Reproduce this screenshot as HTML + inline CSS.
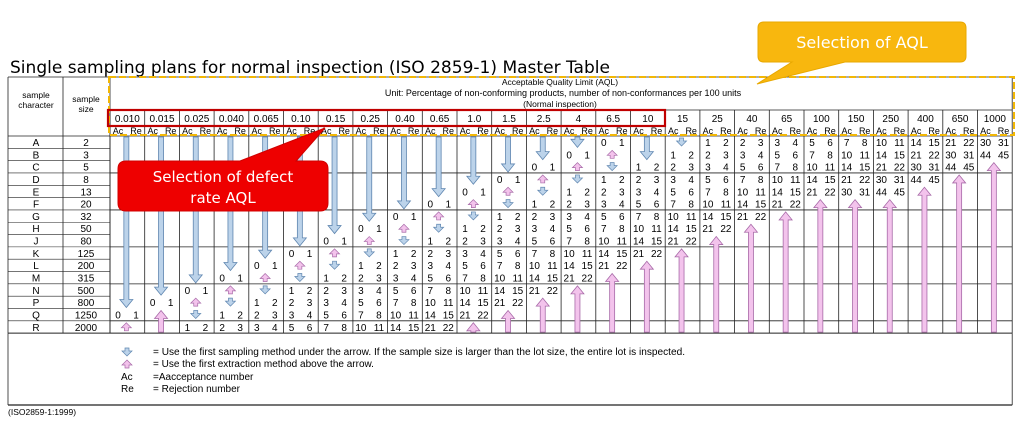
<!DOCTYPE html>
<html><head><meta charset="utf-8">
<style>
html,body{margin:0;padding:0;background:#fff;width:1024px;height:425px;overflow:hidden;position:relative}
svg{position:absolute;left:0;top:0}
text{font-family:"Liberation Sans",sans-serif;fill:#000}
</style></head><body>
<svg id="s" width="1024" height="425" viewBox="0 0 1024 425">
<text x="10" y="73" font-size="17" style="font-family:'DejaVu Sans',sans-serif" textLength="600" lengthAdjust="spacingAndGlyphs">Single sampling plans for normal inspection (ISO 2859-1) Master  Table</text>
<text x="560" y="85" font-size="8.5" text-anchor="middle">Acceptable Quality Limit (AQL)</text>
<text x="563" y="96" font-size="9" text-anchor="middle">Unit: Percentage of non-conforming products, number of non-conformances per 100 units</text>
<text x="560" y="107" font-size="8.5" text-anchor="middle">(Normal inspection)</text>
<text x="36" y="98" font-size="8.5" text-anchor="middle">sample</text>
<text x="36" y="108" font-size="8.5" text-anchor="middle">character</text>
<text x="86" y="102" font-size="8.5" text-anchor="middle">sample</text>
<text x="86" y="112" font-size="8.5" text-anchor="middle">size</text>
<text x="8" y="415" font-size="8.5">(ISO2859-1:1999)</text>
<g id="leg">
<text x="153" y="355" font-size="10" textLength="532" lengthAdjust="spacingAndGlyphs">=  Use the first sampling method under the arrow. If the sample size is larger than the lot size, the entire lot is inspected.</text>
<text x="153" y="367" font-size="10">=  Use the first extraction method above the arrow.</text>
<text x="121" y="380" font-size="10">Ac</text><text x="153" y="380" font-size="10">=Aacceptance number</text>
<text x="121" y="392" font-size="10">Re</text><text x="153" y="392" font-size="10">=  Rejection number</text>
</g>
</svg>
<svg id="o" width="1024" height="425" viewBox="0 0 1024 425">
<rect x="109" y="77" width="905" height="58" fill="none" stroke="#f2b705" stroke-width="2" stroke-dasharray="7,3"/>
<rect x="108" y="110" width="557" height="16" fill="none" stroke="#c00000" stroke-width="2.2"/>
<path d="M766 22 H960 Q966 22 966 28 V56 Q966 62 960 62 H845 L757 84 L792 62 H764 Q758 62 758 56 V28 Q758 22 764 22 Z" fill="#f8b70e" stroke="#e8a800" stroke-width="1"/>
<text x="862" y="48" font-size="16" text-anchor="middle" style="fill:#fff;font-family:'DejaVu Sans','Liberation Sans',sans-serif">Selection of AQL</text>
<path d="M126 161 H240 L325 128 L296 161 H320 Q328 161 328 169 V203 Q328 211 320 211 H126 Q118 211 118 203 V169 Q118 161 126 161 Z" fill="#ee0000" stroke="#d00000" stroke-width="1"/>
<text x="223" y="182" font-size="15" text-anchor="middle" style="fill:#fff;font-family:'DejaVu Sans','Liberation Sans',sans-serif">Selection of defect</text>
<text x="223" y="203" font-size="15" text-anchor="middle" style="fill:#fff;font-family:'DejaVu Sans','Liberation Sans',sans-serif">rate AQL</text>
</svg>
<script>
(function(){
var NS='http://www.w3.org/2000/svg',S=document.getElementById('s');
var G=document.createElementNS(NS,'g');S.insertBefore(G,S.firstChild);
function el(t,a,txt){var e=document.createElementNS(NS,t);for(var k in a)e.setAttribute(k,a[k]);if(txt!=null)e.textContent=txt;G.appendChild(e);return e;}
var X0=110,W=34.7,Y0=136,H=12.32,YB=Y0+16*H,FS=10;
var L='ABCDEFGHJKLMNPQR'.split(''),SZ=[2,3,5,8,13,20,32,50,80,125,200,315,500,800,1250,2000];
var Q=['0.010','0.015','0.025','0.040','0.065','0.10','0.15','0.25','0.40','0.65','1.0','1.5','2.5','4','6.5','10','15','25','40','65','100','150','250','400','650','1000'];
var V={0:[0,1],3:[1,2],4:[2,3],5:[3,4],6:[5,6],7:[7,8],8:[10,11],9:[14,15],10:[21,22],11:[30,31],12:[44,45]};
var XR=X0+26*W;
function ln(x1,y1,x2,y2,w){el('line',{x1:x1,y1:y1,x2:x2,y2:y2,stroke:'#222','stroke-width':w||0.8});}
ln(8,77,XR,77);ln(8,77,8,YB);ln(63,77,63,YB);ln(110,77,110,YB);ln(XR,77,XR,YB);
ln(110,110,XR,110);ln(8,Y0,XR,Y0);ln(8,YB,XR,YB,1);
ln(8,YB,8,405);ln(XR,YB,XR,405);ln(8,405,XR,405,1.2);
for(var r=0;r<16;r++){var y=Y0+r*H;if(r)ln(8,y,110,y,0.6);
el('text',{x:36,y:y+10,'font-size':FS,'text-anchor':'middle'},L[r]);
el('text',{x:86,y:y+10,'font-size':FS,'text-anchor':'middle'},SZ[r]);}
[3,6,9,12,15].forEach(function(r){ln(110,Y0+r*H,XR,Y0+r*H,0.8);});
function up(cx,cy){el('polygon',{points:[cx-5,cy+1,cx,cy-4,cx+5,cy+1,cx+2,cy+1,cx+2,cy+4,cx-2,cy+4,cx-2,cy+1].join(','),fill:'#f3c3ec',stroke:'#a86aa8','stroke-width':0.7});}
function dn(cx,cy){el('polygon',{points:[cx-5,cy-1,cx,cy+4,cx+5,cy-1,cx+2,cy-1,cx+2,cy-4,cx-2,cy-4,cx-2,cy-1].join(','),fill:'#bcd3ea',stroke:'#5f86b0','stroke-width':0.7});}
function ldn(cx,y1,y2){el('polygon',{points:[cx-2.5,y1,cx+2.5,y1,cx+2.5,y2-8,cx+6.5,y2-8,cx,y2,cx-6.5,y2-8,cx-2.5,y2-8].join(','),fill:'#bcd3ea',stroke:'#5f86b0','stroke-width':0.8});}
function lup(cx,y1,y2){el('polygon',{points:[cx-2.5,y2,cx+2.5,y2,cx+2.5,y1+8,cx+6.5,y1+8,cx,y1,cx-6.5,y1+8,cx-2.5,y1+8].join(','),fill:'#f3c3ec',stroke:'#a86aa8','stroke-width':0.8});}
for(var c=0;c<26;c++){
 var x=X0+c*W;ln(x,110,x,YB);
 el('text',{x:x+W/2,y:122,'font-size':FS,'text-anchor':'middle'},Q[c]);
 el('text',{x:x+8,y:134,'font-size':9,'text-anchor':'middle'},'Ac');
 el('text',{x:x+26,y:134,'font-size':9,'text-anchor':'middle'},'Re');
 var mx=c>=22?12:(c>=21?11:10),st=[];
 for(var r=0;r<16;r++){var k=r+c-14;var s;
  if(k<0)s='D';else if(k>mx)s='U';else if(k==1)s='u';else if(k==2)s='d';else s='v';
  st.push([s,k]);}
 if(st[0][0]=='u'){st[0][0]='D';if(st[1]&&st[1][0]=='d')st[1][0]='D';}
 if(st[15][0]=='d'&&st[14][0]=='u'){st[14][0]='U';st[15][0]='U';}
 var cx=x+W/2-1,r=0;
 while(r<16){var s=st[r][0],y=Y0+r*H;
  if(s=='D'||s=='U'){var e=r;while(e<16&&st[e][0]==s)e++;
   if(s=='D')ldn(cx,Y0+1,Y0+e*H-1);else lup(cx,y+2,YB-1);r=e;continue;}
  if(s=='u')up(cx,y+6);else if(s=='d')dn(cx,y+6);
  else{var v=V[st[r][1]];el('text',{x:x+8,y:y+10,'font-size':FS,'text-anchor':'middle'},v[0]);el('text',{x:x+26,y:y+10,'font-size':FS,'text-anchor':'middle'},v[1]);}
  r++;}
}
dn(127,352);up(127,364);
})();
</script>
</body></html>
